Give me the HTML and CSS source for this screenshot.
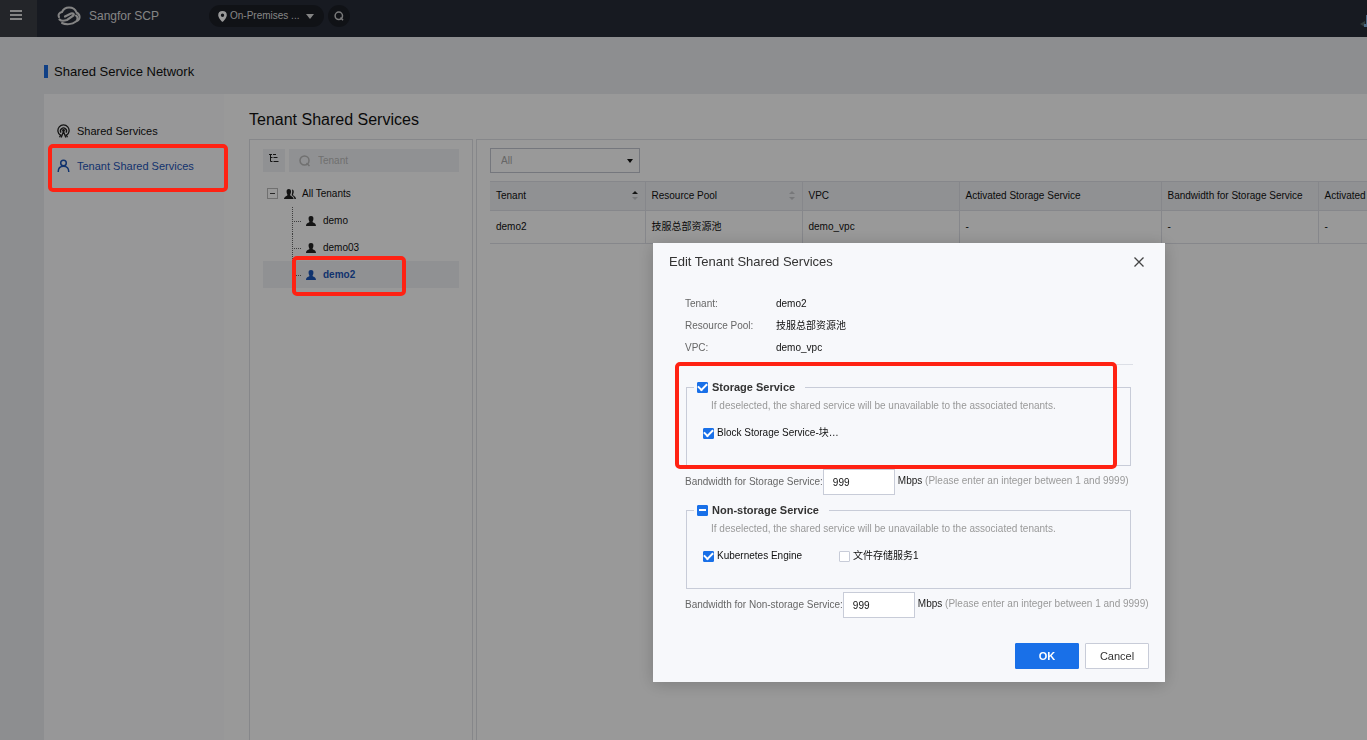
FILE: index.html
```html
<!DOCTYPE html>
<html lang="en">
<head>
  <meta charset="UTF-8">
  <meta name="viewport" content="width=device-width, initial-scale=1.0">
  <title>Sangfor SCP</title>
  <link rel="stylesheet" href="styles.css">
</head>
<body>

  <header class="topbar">
    <button class="menu-btn" type="button" aria-label="Menu"><span></span><span></span><span></span></button>
    <a class="brand" href="#">
      <svg width="24" height="20" viewBox="0 0 24 20" fill="none" stroke="#ddd" stroke-linecap="round">
        <path d="M2 11C.8 8.500 2.500 6.500 5 6C6.500 2.800 9 1.500 12 1.500C16 1.500 18.500 3.500 19.500 6.500C23.500 8.500 23.500 13 20 15" stroke-width="2"/>
        <path d="M2.500 13.500C4 15 7 15 10 14L16.500 9.500C17.500 8 16 7 14 7.500L8 10.500" stroke-width="2.200"/>
        <path d="M5 17C9 19 15 18.500 19 15.500C21 13.500 21 10.500 19 9.500" stroke-width="2"/>
      </svg>
      <span>Sangfor SCP</span>
    </a>
    <button class="region-btn" type="button">
      <svg width="9" height="11" viewBox="0 0 9 11"><path fill="#fff" fill-rule="evenodd" d="M4.500 0A4.300 4.300 0 0 0 .2 4.200C.2 7 4.500 11 4.500 11S8.800 7 8.800 4.200A4.300 4.300 0 0 0 4.500 0zM4.500 2.600a1.700 1.700 0 1 1 0 3.400a1.700 1.700 0 0 1 0-3.400z"/></svg>
      <span>On-Premises ...</span>
      <i class="caret"></i>
    </button>
    <button class="round-btn" type="button" aria-label="Search">
      <svg width="10" height="10" viewBox="0 0 10 10" fill="none" stroke="#ccc" stroke-width="1.500"><circle cx="4.800" cy="4.800" r="3.700"/><path d="M6.500 6.500L9 9.300"/></svg>
    </button>
    <svg class="topbar-pic" width="7" height="12" viewBox="0 0 7 12"><path fill="#566" d="M0 9L5 6V12z"/><path fill="#7fb0dc" d="M6 0h1v12H4V9h2z"/></svg>
  </header>

  <main class="page">
    <h1 class="page-title">Shared Service Network</h1>

    <div class="card">
      <nav class="sidebar">
        <a class="side-link" href="#">
          <svg width="13" height="14" viewBox="0 0 13 14" fill="none" stroke="#222" stroke-width="1.300">
            <path d="M3.500 11.200A5.600 5.600 0 1 1 9.500 11.200"/>
            <path d="M4 8.700A3 3 0 1 1 9 8.700"/>
            <path d="M4.200 13.500L6.500 7.500L8.800 13.500M2.500 13.200L4 10.500M10.500 13.200L9 10.500"/>
            <circle cx="6.500" cy="6.500" r=".8" fill="#222"/>
          </svg>
          <span>Shared Services</span>
        </a>
        <a class="side-link active" href="#">
          <svg width="13" height="14" viewBox="0 0 13 14" fill="none" stroke="#1c55b8" stroke-width="1.500">
            <circle cx="6.500" cy="4" r="2.800"/>
            <path d="M1.200 13C1.200 9.500 3 7.300 6.500 7.300S11.800 9.500 11.800 13"/>
          </svg>
          <span>Tenant Shared Services</span>
          <i class="frame frame-side"></i>
        </a>
      </nav>

      <section class="content">
        <h2 class="content-title">Tenant Shared Services</h2>
        <div class="panels">

          <div class="panel tree-panel">
            <div class="tree-tools">
              <button class="tree-btn" type="button" aria-label="Expand tree">
                <svg width="12" height="10" viewBox="0 0 12 10" stroke="#222" fill="none"><path d="M1 1.500h3M5 1.500h3M2.500 1.500v7h2M2.500 4.500h2M5.500 4.500h4M5.500 8.500h5"/></svg>
              </button>
              <label class="tree-search">
                <svg width="12" height="12" viewBox="0 0 12 12" fill="none" stroke="#bbb" stroke-width="1.500"><circle cx="5.500" cy="5.500" r="4.500"/><path d="M7.500 8L10.500 11"/></svg>
                <input type="text" placeholder="Tenant" aria-label="Tenant">
              </label>
            </div>

            <ul class="tree">
              <li class="tree-row root">
                <button class="toggle" type="button" aria-label="Collapse"></button>
                <svg width="12" height="10" viewBox="0 0 12 10" fill="#222"><path d="M4.800 0C6.400 0 7.200 1.200 7 3C6.900 4.400 6.200 5 6.200 6C6.400 7.200 9.300 7.300 9.600 10H0C.3 7.300 3.200 7.200 3.400 6C3.400 5 2.700 4.400 2.600 3C2.400 1.200 3.200 0 4.800 0z"/><path d="M8 .5C9.500 .7 10 2 9.700 3.500C9.500 4.700 9 5 9.100 6C9.600 7.200 11.800 7.300 12 10H10.500C10.300 8 8.500 7 7.700 6.300C7.800 4.800 8.600 3 8 .5z"/></svg>
                <span>All Tenants</span>
              </li>
              <li class="tree-row">
                <svg width="10" height="10" viewBox="0 0 10 10" fill="#222"><path d="M5 0C6.900 0 7.600 1.200 7.400 3C7.300 4.400 6.600 5 6.600 6C6.800 6.700 9.900 6.700 10 10H0C.1 6.700 3.200 6.700 3.400 6C3.400 5 2.700 4.400 2.600 3C2.400 1.200 3.100 0 5 0z"/></svg>
                <span>demo</span>
              </li>
              <li class="tree-row">
                <svg width="10" height="10" viewBox="0 0 10 10" fill="#222"><path d="M5 0C6.900 0 7.600 1.200 7.400 3C7.300 4.400 6.600 5 6.600 6C6.800 6.700 9.900 6.700 10 10H0C.1 6.700 3.200 6.700 3.400 6C3.400 5 2.700 4.400 2.600 3C2.400 1.200 3.100 0 5 0z"/></svg>
                <span>demo03</span>
              </li>
              <li class="tree-row selected">
                <svg width="10" height="10" viewBox="0 0 10 10" fill="#1c55b8"><path d="M5 0C6.900 0 7.600 1.200 7.400 3C7.300 4.400 6.600 5 6.600 6C6.800 6.700 9.900 6.700 10 10H0C.1 6.700 3.200 6.700 3.400 6C3.400 5 2.700 4.400 2.600 3C2.400 1.200 3.100 0 5 0z"/></svg>
                <span>demo2</span>
                <i class="frame frame-tree"></i>
              </li>
            </ul>
          </div>

          <div class="panel table-panel">
            <div class="select-wrap">
              <select aria-label="Filter"><option>All</option></select>
              <i class="caret"></i>
            </div>
            <table class="grid">
              <colgroup>
                <col class="col-s"><col class="col-m"><col class="col-m"><col class="col-l"><col class="col-m"><col class="col-l">
              </colgroup>
              <thead>
                <tr>
                  <th>Tenant<i class="sort asc"></i></th>
                  <th>Resource Pool<i class="sort"></i></th>
                  <th>VPC</th>
                  <th>Activated Storage Service</th>
                  <th>Bandwidth for Storage Service</th>
                  <th>Activated</th>
                </tr>
              </thead>
              <tbody>
                <tr>
                  <td>demo2</td>
                  <td>技服总部资源池</td>
                  <td>demo_vpc</td>
                  <td>-</td>
                  <td>-</td>
                  <td>-</td>
                </tr>
              </tbody>
            </table>
          </div>

        </div>
      </section>
    </div>
  </main>

  <div class="mask"></div>

  <!-- Edit dialog -->
  <form class="dialog" role="dialog" aria-labelledby="dialogTitle">
    <div class="dialog-head">
      <h3 id="dialogTitle">Edit Tenant Shared Services</h3>
      <button class="close-btn" type="button" aria-label="Close">
        <svg width="10" height="10" viewBox="0 0 10 10" stroke="#444" stroke-width="1.300"><path d="M.5 .5L9.500 9.500M9.500 .5L.5 9.500"/></svg>
      </button>
    </div>

    <div class="dialog-body">
      <dl class="info">
        <dt>Tenant:</dt><dd>demo2</dd>
        <dt>Resource Pool:</dt><dd>技服总部资源池</dd>
        <dt>VPC:</dt><dd>demo_vpc</dd>
      </dl>

      <fieldset class="group">
        <legend><label><input type="checkbox" checked>Storage Service</label></legend>
        <p class="hint">If deselected, the shared service will be unavailable to the associated tenants.</p>
        <div class="options">
          <label><input type="checkbox" checked>Block Storage Service-块…</label>
        </div>
        <i class="frame frame-group"></i>
      </fieldset>
      <div class="bandwidth">
        <label for="bwStorage">Bandwidth for Storage Service:</label>
        <input type="text" id="bwStorage" value="999">
        <span class="unit">Mbps <em>(Please enter an integer between 1 and 9999)</em></span>
      </div>

      <fieldset class="group">
        <legend><label><input type="checkbox" class="partial">Non-storage Service</label></legend>
        <p class="hint">If deselected, the shared service will be unavailable to the associated tenants.</p>
        <div class="options">
          <label><input type="checkbox" checked>Kubernetes Engine</label>
          <label><input type="checkbox">文件存储服务1</label>
        </div>
      </fieldset>
      <div class="bandwidth">
        <label for="bwOther">Bandwidth for Non-storage Service:</label>
        <input type="text" id="bwOther" value="999">
        <span class="unit">Mbps <em>(Please enter an integer between 1 and 9999)</em></span>
      </div>
    </div>

    <div class="dialog-foot">
      <button class="btn primary" type="submit">OK</button>
      <button class="btn" type="button">Cancel</button>
    </div>
  </form>

</body>
</html>
```
FILE: styles.css
```css
* {
  margin: 0;
  padding: 0;
  box-sizing: border-box;
}

body {
  min-height: 100vh;
  display: flex;
  flex-direction: column;
  overflow: hidden;
  background: #ebedf0;
  color: #111;
  font: 10px/14px "Liberation Sans", Arial, "Noto Sans CJK SC", sans-serif;
}

a {
  color: inherit;
  text-decoration: none;
}

button, input, select {
  font: inherit;
  color: inherit;
  border: none;
  background: none;
}

svg {
  flex: none;
}

/* Top bar */
.topbar {
  height: 37px;
  padding-bottom: 5px;
  display: flex;
  align-items: center;
  background: #272c38;
  color: #fff;
}
.menu-btn {
  width: 37px;
  height: 37px;
  margin-bottom: -5px;
  padding: 0 15px 7px 10px;
  display: flex;
  flex-direction: column;
  justify-content: center;
  gap: 2px;
  background: #3b3f45;
}
.menu-btn span {
  width: 12px;
  height: 2px;
  background: #ddd;
}
.brand {
  width: 172px;
  padding-left: 20px;
  display: flex;
  align-items: center;
  gap: 8px;
  font-size: 12px;
  color: #ddd;
}
.region-btn {
  width: 115px;
  height: 22px;
  padding: 0 10px 0 9px;
  display: flex;
  align-items: center;
  gap: 3px;
  border-radius: 11px;
  background: #1b1e26;
  color: #ddd;
}
.region-btn .caret {
  margin-left: auto;
}
.caret {
  border: 4px solid transparent;
  border-top: 5px solid currentColor;
  border-bottom: none;
}
.round-btn {
  width: 22px;
  height: 22px;
  margin-left: 4px;
  display: flex;
  align-items: center;
  justify-content: center;
  border-radius: 50%;
  background: #1b1e26;
}
.topbar-pic {
  margin: 10px 0 0 auto;
}

/* Page */
.page {
  flex: 1;
  padding: 26px 0 0 44px;
  display: flex;
  flex-direction: column;
}
.page-title {
  margin-bottom: 14px;
  display: flex;
  align-items: center;
  gap: 6px;
  font-size: 13px;
  line-height: 17px;
  font-weight: normal;
}
.page-title::before {
  content: "";
  width: 4px;
  height: 13px;
  background: #1c6be0;
}
.card {
  flex: 1;
  display: flex;
  background: #fff;
}
.sidebar {
  width: 180px;
  padding-top: 19px;
  background: #fcfcfd;
}
.side-link {
  position: relative;
  height: 35px;
  padding-left: 13px;
  display: flex;
  align-items: center;
  gap: 7px;
  font-size: 11px;
}
.side-link.active {
  color: #1c55b8;
}
.content {
  flex: 1;
  min-width: 0;
  padding: 16px 0 0 25px;
  display: flex;
  flex-direction: column;
}
.content-title {
  margin-bottom: 9px;
  font-size: 16px;
  line-height: 20px;
  font-weight: normal;
}
.panels {
  flex: 1;
  display: flex;
  gap: 3px;
}
.panel {
  border: 1px solid #dfe1e6;
  border-bottom: none;
}

/* Tenant tree */
.tree-panel {
  width: 224px;
  padding: 9px 13px;
}
.tree-tools {
  display: flex;
  gap: 4px;
}
.tree-btn {
  width: 22px;
  height: 23px;
  padding-bottom: 6px;
  display: flex;
  align-items: center;
  justify-content: center;
  background: #f0f2f5;
}
.tree-search {
  flex: 1;
  height: 23px;
  padding-left: 10px;
  display: flex;
  align-items: center;
  gap: 7px;
  background: #f0f2f5;
}
.tree-search input {
  width: 100%;
}
.tree-search input::placeholder {
  color: #bbb;
}
.tree {
  margin-top: 8px;
  list-style: none;
}
.tree-row {
  position: relative;
  height: 27px;
  padding-left: 43px;
  display: flex;
  align-items: center;
  gap: 7px;
}
.tree-row::before {
  content: "";
  position: absolute;
  left: 29px;
  top: 0;
  width: 8px;
  height: 14px;
  border-left: 1px dotted #666;
  border-bottom: 1px dotted #666;
}
.tree-row::after {
  content: "";
  position: absolute;
  left: 29px;
  top: 14px;
  height: 13px;
  border-left: 1px dotted #666;
}
.tree-row.root {
  padding-left: 4px;
  gap: 6px;
}
.tree-row.root::before,
.tree-row.root::after,
.tree-row.selected::after {
  display: none;
}
.tree-row.selected {
  background: #f0f2f5;
  color: #1c55b8;
  font-weight: bold;
}
.toggle {
  width: 11px;
  height: 11px;
  padding: 0 2px;
  display: flex;
  align-items: center;
  border: 1px solid #bbb;
}
.toggle::before {
  content: "";
  width: 100%;
  height: 1px;
  background: #444;
}

/* Table */
.table-panel {
  flex: 1;
  min-width: 0;
  padding: 8px 0 0 13px;
  border-right: none;
  overflow: hidden;
}
.select-wrap {
  position: relative;
  width: 150px;
  margin-bottom: 8px;
}
.select-wrap select {
  display: block;
  width: 100%;
  height: 25px;
  padding: 0 10px;
  appearance: none;
  border: 1px solid #c3c6d0;
  color: #aaa;
}
.select-wrap .caret {
  position: absolute;
  right: 7px;
  top: 11px;
  border-width: 4px 3px 0;
}
.grid {
  width: 1030px;
  table-layout: fixed;
  border-collapse: collapse;
}
.col-s {
  width: 155px;
}
.col-m {
  width: 157px;
}
.col-l {
  width: 202px;
}
.grid th, .grid td {
  position: relative;
  padding: 0 6px;
  border: 1px solid #dfe1e8;
  border-left: none;
  text-align: left;
  font-weight: normal;
  white-space: nowrap;
}
.grid th {
  height: 29px;
  background: #f0f2f5;
}
.grid td {
  height: 33px;
}
.sort {
  position: absolute;
  right: 7px;
  top: 9px;
  width: 6px;
}
.sort::before, .sort::after {
  content: "";
  display: block;
  border: 3px solid transparent;
}
.sort::before {
  border-top: none;
  border-bottom-color: #c6c8cc;
  margin-bottom: 3px;
}
.sort::after {
  border-bottom: none;
  border-top-color: #c6c8cc;
}
.sort.asc::before {
  border-bottom-color: #222;
}

/* Mask and red frames */
.mask {
  position: fixed;
  inset: 0;
  z-index: 10;
  background: rgba(0, 0, 0, 0.4);
}
.frame {
  position: absolute;
  z-index: 30;
  border: 4px solid #ff2213;
  border-radius: 5px;
  pointer-events: none;
}
.frame-side {
  inset: -4px -4px -9px 4px;
}
.frame-tree {
  inset: -5px 53px -8px 29px;
}
.frame-group {
  inset: -32px 13px -4px -12px;
}

/* Dialog */
.dialog {
  position: fixed;
  left: 653px;
  top: 243px;
  z-index: 20;
  width: 512px;
  background: #f7f8fb;
  box-shadow: 0 2px 16px rgba(0, 0, 0, 0.2);
}
.dialog-head {
  height: 37px;
  padding: 0 21px 0 16px;
  display: flex;
  align-items: center;
  justify-content: space-between;
}
.dialog-head h3 {
  font-size: 13px;
  font-weight: normal;
  color: #333;
}
.close-btn {
  display: flex;
}
.dialog-body {
  padding: 13px 32px 0;
}
.info {
  margin-bottom: 15px;
  padding-bottom: 5px;
  display: grid;
  grid-template-columns: 91px 1fr;
  line-height: 22px;
  border-bottom: 1px solid #dcdfe6;
}
.info dt {
  color: #666;
}
.group {
  position: relative;
  height: 86px;
  margin: 0 2px 0 1px;
  padding-left: 16px;
  border: 1px solid #c8ccd8;
}
.group legend {
  margin-left: -9px;
  padding: 0 10px 0 3px;
  font-size: 11px;
  font-weight: bold;
  color: #333;
}
.group label {
  display: flex;
  align-items: center;
  gap: 3px;
}
.group legend label {
  gap: 4px;
}
.hint {
  margin: 5px 0 13px 8px;
  color: #999;
}
.options {
  display: flex;
}
.options label {
  width: 136px;
}
input[type="checkbox"] {
  width: 11px;
  height: 11px;
  display: flex;
  align-items: center;
  justify-content: center;
  flex: none;
  appearance: none;
  border: 1px solid #c8ccd8;
  border-radius: 1px;
  background: #fff;
}
input[type="checkbox"]:checked,
input[type="checkbox"].partial {
  border-color: #1970e8;
  background: #1970e8;
}
input[type="checkbox"]:checked::after {
  content: "";
  width: 7px;
  height: 4px;
  margin-bottom: 2px;
  border-left: 2px solid #fff;
  border-bottom: 2px solid #fff;
  transform: rotate(-45deg);
}
input.partial::after {
  content: "";
  width: 7px;
  height: 2px;
  background: #fff;
}
.bandwidth {
  margin: 3px 0 8px;
  display: flex;
  align-items: center;
  color: #666;
  white-space: nowrap;
}
.bandwidth input {
  width: 72px;
  height: 26px;
  padding: 0 9px;
  border: 1px solid #c8ccd8;
  background: #fff;
  color: #111;
}
.unit {
  padding: 0 0 2px 3px;
  color: #222;
}
.unit em {
  font-style: normal;
  color: #999;
}
.dialog-foot {
  padding: 17px 16px 13px;
  display: flex;
  justify-content: flex-end;
  gap: 6px;
}
.btn {
  width: 64px;
  height: 26px;
  border: 1px solid #c8ccd8;
  border-radius: 1px;
  background: #fff;
  color: #333;
  font-size: 11px;
}
.btn.primary {
  border-color: #1970e8;
  background: #1970e8;
  color: #fff;
  font-weight: bold;
}
```
